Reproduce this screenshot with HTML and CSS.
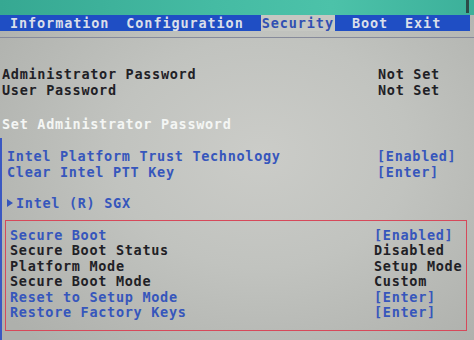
FILE: index.html
```html
<!DOCTYPE html>
<html lang="en">
<head>
    <meta charset="UTF-8">
    <meta name="viewport" content="width=device-width, initial-scale=1.0">
    <title>BIOS Setup - Security</title>
    <link rel="stylesheet" href="styles.css">
</head>
<body>
    <div class="screen">
        <div class="top-strip">
            <span class="tick"></span>
        </div>

        <nav class="menu">
            <span class="menu-item">Information</span>
            <span class="menu-item">Configuration</span>
            <span class="menu-item active">Security</span>
            <span class="menu-item">Boot</span>
            <span class="menu-item">Exit</span>
        </nav>
        <div class="rule"></div>

        <div class="passwords">
            <div class="row">
                <span class="label">Administrator Password</span>
                <span class="value">Not Set</span>
            </div>
            <div class="row">
                <span class="label">User Password</span>
                <span class="value">Not Set</span>
            </div>
            <div class="row selected">
                <span class="label">Set Administrator Password</span>
            </div>
        </div>

        <div class="lower">
            <div class="row link">
                <span class="label">Intel Platform Trust Technology</span>
                <span class="value">[Enabled]</span>
            </div>
            <div class="row link">
                <span class="label">Clear Intel PTT Key</span>
                <span class="value">[Enter]</span>
            </div>

            <div class="row link submenu">
                <span class="label"><i class="arrow"></i>Intel (R) SGX</span>
            </div>

            <div class="secure-box">
                <div class="row link">
                    <span class="label">Secure Boot</span>
                    <span class="value">[Enabled]</span>
                </div>
                <div class="row">
                    <span class="label">Secure Boot Status</span>
                    <span class="value">Disabled</span>
                </div>
                <div class="row">
                    <span class="label">Platform Mode</span>
                    <span class="value">Setup Mode</span>
                </div>
                <div class="row">
                    <span class="label">Secure Boot Mode</span>
                    <span class="value">Custom</span>
                </div>
                <div class="row link">
                    <span class="label">Reset to Setup Mode</span>
                    <span class="value">[Enter]</span>
                </div>
                <div class="row link">
                    <span class="label">Restore Factory Keys</span>
                    <span class="value">[Enter]</span>
                </div>
            </div>
        </div>
    </div>
</body>
</html>
```

FILE: styles.css
```css
* {
    margin: 0;
    padding: 0;
    box-sizing: border-box;
}

body {
    font-family: 'DejaVu Sans Mono', 'Liberation Mono', monospace;
    font-size: 13.5px;
    font-weight: bold;
    letter-spacing: 0.7px;
    color: #1f2126;
    background: #b4b6b2;
}

.screen {
    width: 474px;
    height: 340px;
    overflow: hidden;
    background:
        radial-gradient(ellipse 70% 75% at 55% 45%, #cbccc8 0%, #c1c3bf 45%, #aeb0ac 100%);
}

/* top strip */
.top-strip {
    height: 15px;
    display: flex;
    justify-content: flex-end;
    background: linear-gradient(90deg, #36a892 0%, #45bba3 45%, #4cc2a9 70%, #3cb09a 100%);
}

.tick {
    width: 3px;
    height: 13px;
    margin-right: 5px;
    background: #2c4a48;
}

/* menu bar */
.menu {
    height: 16px;
    margin-right: 4px;
    display: flex;
    align-items: center;
    gap: 17px;
    padding-left: 10px;
    background: #1f4ec4;
    letter-spacing: 0.9px;
    line-height: 16px;
}

.menu-item {
    color: #dadfea;
}

.menu-item.active {
    padding: 0 1px;
    background: #c5c7c2;
    color: #3150b2;
}

.rule {
    height: 1px;
    margin-top: 6px;
    background: #868a9a;
}

/* rows */
.row {
    display: flex;
    height: 16px;
    line-height: 16px;
    white-space: nowrap;
}

.link {
    color: #3656bc;
}

.selected {
    color: #f4f6f4;
    margin-top: 18.5px;
}

.passwords {
    padding: 27.5px 0 0 2px;
}

.passwords .label {
    width: 376px;
}

.lower {
    margin-top: 6px;
    padding: 9.5px 0 0 5px;
    border-left: 2px solid #3a58c2;
    height: 204px;
}

.lower .label {
    width: 370px;
}

.submenu {
    margin-top: 15.5px;
}

.arrow {
    display: inline-block;
    width: 0;
    height: 0;
    margin: 0 3px 1px 0;
    border-left: 6px solid #3656bc;
    border-top: 4px solid transparent;
    border-bottom: 4px solid transparent;
}

.secure-box {
    margin: 9px 7px 0 -2px;
    padding: 6.5px 0 9.5px 4px;
    border: 1px solid #d6495a;
}

.secure-box .row {
    height: 15.5px;
    line-height: 15.5px;
}

.secure-box .label {
    width: 364px;
}
```
